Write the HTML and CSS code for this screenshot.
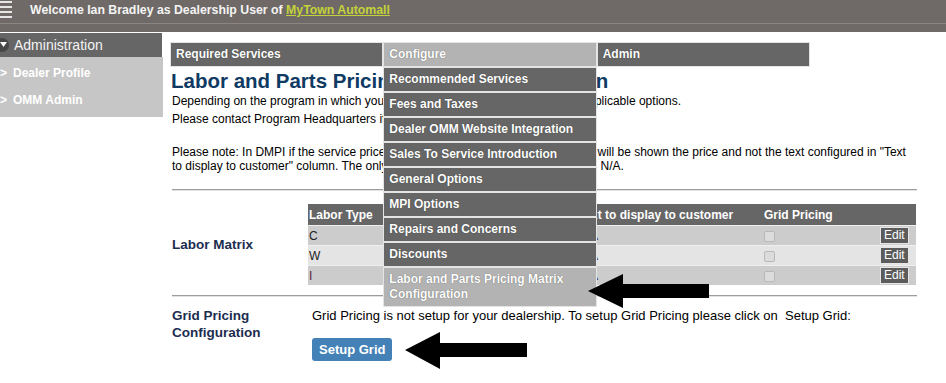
FILE: index.html
```html
<!DOCTYPE html>
<html lang="en">
<head>
  <meta charset="UTF-8" />
  <meta name="viewport" content="width=device-width, initial-scale=1.0" />
  <title>Labor and Parts Pricing Matrix Configuration</title>
  <link rel="stylesheet" href="styles.css">
</head>
<body>
  <header class="topbar">
    <span class="burger"><i></i><i></i><i></i><i></i></span>
    <span class="welcome">Welcome Ian Bradley as Dealership User of <a href="#">MyTown Automall</a></span>
  </header>
  <div class="subbar"></div>

  <div class="layout">
    <aside class="sidebar">
      <div class="side-title">
        <svg class="toggle" width="14" height="14" viewBox="0 0 14 14">
          <circle cx="7" cy="7" r="7" fill="#474747" />
          <polygon points="5,4 12,4 8.5,9" fill="#fff" />
        </svg>
        Administration
      </div>
      <ul class="side-links">
        <li>Dealer Profile</li>
        <li>OMM Admin</li>
      </ul>
    </aside>

    <main class="content">
      <nav class="menubar">
        <div class="menu-item">Required Services</div>
        <div class="menu-item active">Configure
          <ul class="dropdown">
            <li>Recommended Services</li>
            <li>Fees and Taxes</li>
            <li>Dealer OMM Website Integration</li>
            <li>Sales To Service Introduction</li>
            <li>General Options</li>
            <li>MPI Options</li>
            <li>Repairs and Concerns</li>
            <li>Discounts</li>
            <li class="current">Labor and Parts Pricing Matrix Configuration</li>
          </ul>
        </div>
        <div class="menu-item">Admin</div>
      </nav>

      <h1>Labor and Parts Pricing Matrix Configuration</h1>
      <p class="lead">Depending on the program in which your dealership is enrolled, select all the applicable options.</p>
      <p class="lead second">Please contact Program Headquarters if you have any questions.</p>
      <p class="note">Please note: In DMPI if the service price is set to a numeric value, the customer will be shown the price and not the text configured in "Text to display to customer" column. The only exception is when the service's price is N/A.</p>

      <hr />

      <section class="section">
        <div class="section-label">Labor Matrix</div>
        <table class="matrix">
          <colgroup>
            <col style="width:140px">
            <col style="width:129px">
            <col style="width:186px">
            <col style="width:116px">
            <col style="width:37px">
          </colgroup>
          <tr>
            <th>Labor Type</th>
            <th>Description</th>
            <th>Text to display to customer</th>
            <th>Grid Pricing</th>
            <th></th>
          </tr>
          <tr>
            <td>C</td>
            <td>Customer Pay</td>
            <td>N/A</td>
            <td><span class="check"></span></td>
            <td class="edit-cell"><span class="edit-btn">Edit</span></td>
          </tr>
          <tr>
            <td>W</td>
            <td>Warranty</td>
            <td>N/A</td>
            <td><span class="check"></span></td>
            <td class="edit-cell"><span class="edit-btn">Edit</span></td>
          </tr>
          <tr>
            <td class="internal">I</td>
            <td>Internal</td>
            <td>N/A</td>
            <td><span class="check"></span></td>
            <td class="edit-cell"><span class="edit-btn">Edit</span></td>
          </tr>
        </table>
      </section>

      <hr class="second-rule" />

      <section class="grid-section">
        <div class="section-label wide">Grid Pricing<br>Configuration</div>
        <div class="grid-body">
          <p>Grid Pricing is not setup for your dealership. To setup Grid Pricing please click on&nbsp; Setup Grid:</p>
          <button class="setup-btn">Setup Grid</button>
        </div>
      </section>
    </main>
  </div>

  <svg class="arrows" width="946" height="383" viewBox="0 0 946 383">
    <polygon points="588,291 623,274 623,284 709,284 709,298 623,298 623,308" fill="#000" />
    <polygon points="405,350 440,332 440,343 527,343 527,357 440,357 440,369" fill="#000" />
  </svg>
</body>
</html>
```

FILE: styles.css
```css
body {
  margin: 0;
  font-family: "Liberation Sans", Arial, sans-serif;
  font-size: 12px;
  color: #000;
  background: #fff;
}
.topbar {
  height: 23px;
  background: #6f6a67;
  display: flex;
}
.burger {
  width: 12px;
  margin-top: 1px;
  display: flex;
  flex-direction: column;
  gap: 3px;
}
.burger i {
  display: block;
  height: 2px;
  background: #e6e6e6;
}
.welcome {
  margin-left: 18px;
  line-height: 21px;
  font-size: 12.3px;
  font-weight: bold;
  color: #f4f4f4;
}
.welcome a {
  color: #c3d23b;
}
.subbar {
  height: 8px;
  background: #6f6a67;
  border-top: 1px solid #8c8683;
}
.layout {
  display: flex;
  align-items: flex-start;
}
.sidebar {
  width: 163px;
  margin-top: 1px;
  flex: none;
}
.side-title {
  width: 162px;
  height: 24px;
  background: #666;
  color: #f4f4f4;
  font-size: 14px;
  display: flex;
  align-items: center;
  overflow: hidden;
}
.toggle {
  margin-left: -5px;
  margin-right: 5px;
  flex: none;
}
.side-links {
  list-style: none;
  margin: 0;
  padding: 3px 0;
  background: #c6c6c6;
}
.side-links li {
  height: 27px;
  line-height: 27px;
  font-weight: bold;
  color: #fff;
}
.side-links li::before {
  content: ">";
  margin-right: 6px;
}
.content {
  margin-left: 9px;
  width: 745px;
  padding-top: 10px;
}
.menubar {
  margin-left: -2px;
  width: 640px;
  box-sizing: border-box;
  display: flex;
  gap: 2px;
  padding: 1px;
  background: #e4e4e4;
}
.menu-item {
  flex: 1;
  position: relative;
  height: 23px;
  line-height: 23px;
  padding-left: 5px;
  background: #666;
  color: #fff;
  font-weight: bold;
  text-shadow: 0 0 1px rgba(0, 0, 0, 0.5);
}
.menu-item.active {
  background: #b3b3b3;
}
.dropdown {
  position: absolute;
  top: 23px;
  left: -1px;
  right: -1px;
  z-index: 2;
  list-style: none;
  margin: 0;
  padding: 2px 1px 1px;
  background: #e4e4e4;
  display: flex;
  flex-direction: column;
  gap: 2px;
}
.dropdown li {
  height: 23px;
  line-height: 23px;
  padding-left: 5px;
  background: #666;
}
.dropdown li.current {
  height: auto;
  line-height: 15px;
  padding: 4px 5px;
  background: #b3b3b3;
}
h1 {
  margin: 2px 0 0 -1px;
  font-size: 20.5px;
  line-height: 24px;
  color: #0f3a63;
}
.lead {
  margin: 1px 0 0;
  line-height: 14px;
}
.lead.second {
  margin-top: 4px;
}
.note {
  margin: 19px 0 0;
  line-height: 14px;
}
hr {
  margin: 16px 0 0;
  border: 0;
  border-top: 1px solid #9d9d9d;
  border-bottom: 1px solid #e2e2e2;
}
hr.second-rule {
  margin-top: 10px;
}
.section {
  display: flex;
  align-items: center;
  margin-top: 13px;
}
.section-label {
  width: 136px;
  flex: none;
  font-size: 13.5px;
  font-weight: bold;
  color: #1b2d4f;
}
.section-label.wide {
  width: 140px;
  line-height: 17px;
}
.matrix {
  width: 608px;
  table-layout: fixed;
  border-collapse: collapse;
}
.matrix th {
  height: 21px;
  padding: 0 1px;
  background: #666;
  color: #fff;
  text-align: left;
  font-weight: bold;
  white-space: nowrap;
  overflow: hidden;
}
.matrix td {
  height: 19px;
  padding: 0 1px;
  border-top: 1px solid #efefef;
  background: #ccc;
  color: #222;
}
.matrix tr:nth-child(3) td {
  background: #e4e4e4;
}
.matrix td.internal {
  color: #5b2340;
}
.check {
  display: inline-block;
  width: 11px;
  height: 11px;
  box-sizing: border-box;
  border: 1px solid #b9b9b9;
  border-radius: 2px;
  background: #dcdcdc;
  vertical-align: middle;
}
.matrix td.edit-cell {
  text-align: right;
  padding-right: 8px;
}
.edit-btn {
  display: inline-block;
  padding: 0 3px;
  line-height: 15px;
  background: #5c5c5c;
  border: 1px solid #e6e6e6;
  color: #fff;
  vertical-align: middle;
}
.grid-section {
  display: flex;
  margin-top: 10px;
}
.grid-body p {
  margin: 0;
  font-size: 13px;
  line-height: 17px;
}
.setup-btn {
  margin-top: 14px;
  height: 23px;
  padding: 0 7px;
  border: 0;
  border-radius: 3px;
  background: #4381b7;
  color: #fff;
  font-family: inherit;
  font-size: 13px;
  font-weight: bold;
}
.arrows {
  position: absolute;
  top: 0;
  left: 0;
  pointer-events: none;
  z-index: 3;
}
```
